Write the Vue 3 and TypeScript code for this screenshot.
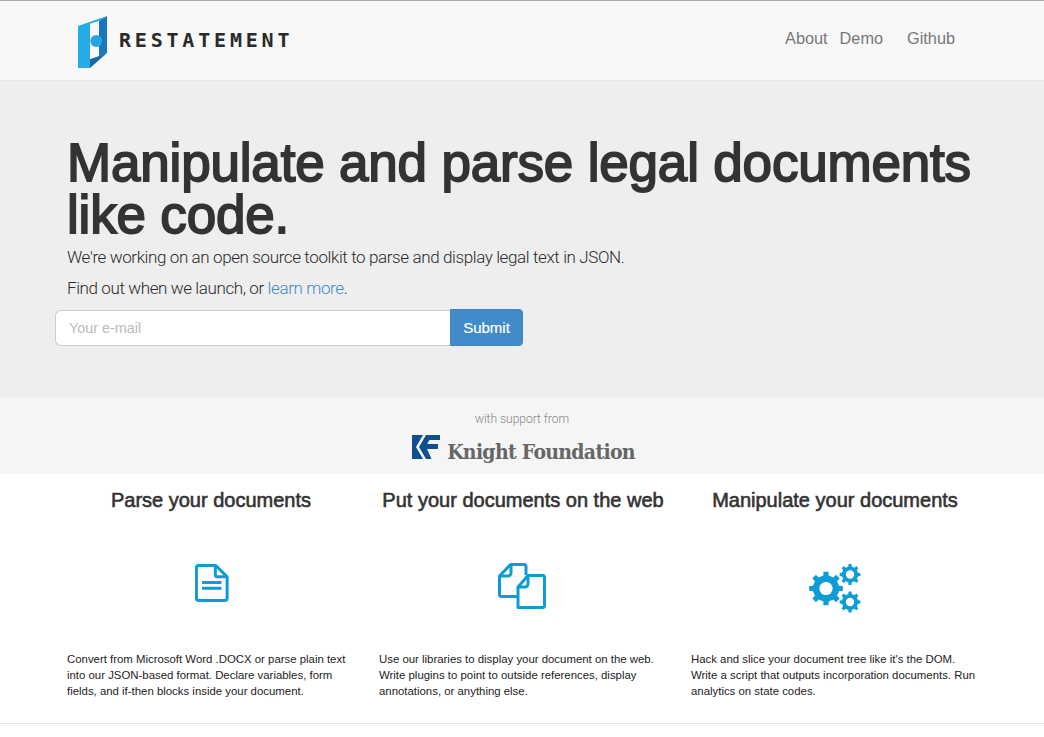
<script setup lang="ts">
interface Feature { title: string; lines: string[]; icon: string }
const features: Feature[] = [
  { title: 'Parse your documents', icon: 'doc', lines: ['Convert from Microsoft Word .DOCX or parse plain text', 'into our JSON-based format. Declare variables, form', 'fields, and if-then blocks inside your document.'] },
  { title: 'Put your documents on the web', icon: 'docs', lines: ['Use our libraries to display your document on the web.', 'Write plugins to point to outside references, display', 'annotations, or anything else.'] },
  { title: 'Manipulate your documents', icon: 'gears', lines: ["Hack and slice your document tree like it's the DOM.", 'Write a script that outputs incorporation documents. Run', 'analytics on state codes.'] }
]
const gear = (cx: number, cy: number, r: number, teeth: number) => {
  const pts: string[] = []
  const step = (Math.PI * 2) / teeth
  for (let i = 0; i < teeth; i++) {
    const a = i * step - Math.PI / 2
    const w = step * 0.19
    const ri = r * 0.78
    const p = (rad: number, ang: number) => `${(cx + rad * Math.cos(ang)).toFixed(2)} ${(cy + rad * Math.sin(ang)).toFixed(2)}`
    pts.push(p(ri, a - w * 1.35), p(r, a - w), p(r, a + w), p(ri, a + w * 1.35))
  }
  return `M${pts.join('L')}Z`
}
const gears = [
  { d: gear(17, 24.500, 17, 8), cx: 17, cy: 24.500, r: 6.600 },
  { d: gear(41, 10.500, 10.500, 8), cx: 41, cy: 10.500, r: 4.200 },
  { d: gear(41, 38, 10.500, 8), cx: 41, cy: 38, r: 4.200 }
]
</script>

<template>
  <div class="page">
    <header class="navbar">
      <div class="brand">
        <svg class="logo" width="30" height="52" viewBox="5 5 30 52" aria-hidden="true">
          <path d="M5 15L34 5L26 10L17 13V57H5Z" fill="#25ace6" />
          <path d="M26 10L34 5V42L26 45Z" fill="#1b76bb" />
          <path d="M17 48L34 42L17 57Z" fill="#1868a8" />
          <path d="M17 13L26 10V45L17 48Z" fill="#f8f8f8" />
          <circle cx="23.300" cy="30" r="6" fill="#25a5e0" />
        </svg>
        <span class="wordmark">RESTATEMENT</span>
      </div>
      <nav class="links">
        <a>About</a><a class="demo">Demo</a><a class="github">Github</a>
      </nav>
    </header>

    <section class="hero">
      <h1>Manipulate and parse legal documents like code.</h1>
      <p class="lead first">We're working on an open source toolkit to parse and display legal text in JSON.</p>
      <p class="lead">Find out when we launch, or <a>learn more</a>.</p>
      <form class="signup" @submit.prevent>
        <input type="text" placeholder="Your e-mail" />
        <button type="submit">Submit</button>
      </form>
    </section>

    <section class="support">
      <div class="with">with support from</div>
      <div class="knight">
        <svg width="28" height="24" viewBox="7 5 28 24" aria-hidden="true">
          <path d="M7 5H18L11 17L18 29H7Z" fill="#0e4f8f" />
          <path d="M21 5H35V10H24.500L22 14H33V19H22L26.500 29H21L14 17Z" fill="#0e4f8f" />
        </svg>
        <span>Knight Foundation</span>
      </div>
    </section>

    <section class="features">
      <article v-for="f in features" :key="f.title" class="feature">
        <h3>{{ f.title }}</h3>
        <div class="icon">
          <svg v-if="f.icon === 'doc'" class="i-doc" width="34" height="38" viewBox="0 0 36 40" fill="none" stroke="#0e9cd6" stroke-width="3.200" stroke-linejoin="round" aria-hidden="true">
            <path d="M3.500 1.500H22L34 13.500V36a2.500 2.500 0 0 1-2.500 2.500H4a2.500 2.500 0 0 1-2.500-2.500V3.500a2 2 0 0 1 2-2Z" />
            <path d="M21.500 2V11a2.500 2.500 0 0 0 2.500 2.500H34" />
            <path d="M7.500 19.500H28M7.500 25.500H28" />
          </svg>
          <svg v-else-if="f.icon === 'docs'" class="i-docs" width="48" height="46" viewBox="0 0 48 46" fill="none" stroke="#0e9cd6" stroke-width="3" stroke-linejoin="round" aria-hidden="true">
            <path d="M20 33.500H3.500a2 2 0 0 1-2-2V13L12.500 1.500H26a2 2 0 0 1 2 2V12" />
            <path d="M2 13H10a3 3 0 0 0 3-3V2" />
            <path d="M20 44.500V24L30 12.500H44.500a2 2 0 0 1 2 2V42.500a2 2 0 0 1-2 2Z" />
            <path d="M20.500 24H27a3 3 0 0 0 3-3V13" />
          </svg>
          <svg v-else width="52" height="49" viewBox="0 0 52 49" aria-hidden="true">
            <path v-for="(g, i) in gears" :key="i" :d="g.d" fill="#0e9cd6" />
            <circle v-for="(g, i) in gears" :key="'h' + i" :cx="g.cx" :cy="g.cy" :r="g.r" fill="#fff" />
          </svg>
        </div>
        <p>
          <template v-for="(line, i) in f.lines" :key="i">{{ line }}<br /></template>
        </p>
      </article>
    </section>
    <hr class="rule" />
  </div>
</template>

<style>
html, body { margin: 0; background: #fff; }
</style>

<style scoped>
.page {
  width: 1044px;
  height: 737px;
  overflow: hidden;
  font-family: "Liberation Sans", Arial, sans-serif;
  color: #333;
  border-top: 1px solid #a9a9a9;
  box-sizing: border-box;
}
.navbar {
  height: 80px;
  box-sizing: border-box;
  background: #f8f8f8;
  border-bottom: 1px solid #e7e7e7;
  display: flex;
  align-items: center;
  justify-content: space-between;
  padding: 0 89px 2px 78px;
}
.brand { display: flex; align-items: center; gap: 11px; }
.logo { margin-top: 4px; }
.wordmark {
  font-family: "DejaVu Sans Mono", monospace;
  font-weight: 700;
  font-size: 20px;
  letter-spacing: 3.800px;
  color: #2a2a2a;
}
.links { display: flex; font-size: 16.300px; color: #777; margin-top: -3px; }
.demo { margin-left: 12px; }
.github { margin-left: 24px; }
.hero {
  height: 316px;
  box-sizing: border-box;
  background: #eee;
  padding: 56px 55px 0;
}
h1 {
  margin: 0 0 0 12px;
  font-size: 53px;
  line-height: 52px;
  letter-spacing: -0.18px;
  font-weight: 400;
  -webkit-text-stroke: 1.800px #333;
  color: #333;
  width: 930px;
}
.lead {
  margin: 0 0 0 12px;
  font-family: Roboto, "Liberation Sans", sans-serif;
  font-size: 17px;
  font-weight: 300;
  line-height: 25px;
  letter-spacing: -0.39px;
  color: #2a2a2a;
}
.lead.first { margin-top: 4px; margin-bottom: 6px; }
.lead a { color: #428bca; }
.signup { display: flex; margin-top: 9px; }
.signup input {
  width: 395px;
  height: 36px;
  box-sizing: border-box;
  border: 1px solid #ccc;
  border-right: none;
  border-radius: 6px 0 0 6px;
  padding: 0 13px;
  font: 14.400px "Liberation Sans", Arial, sans-serif;
  background: #fff;
  outline: none;
}
.signup input::placeholder { color: #bbb; opacity: 1; }
.signup button {
  width: 73px;
  height: 37px;
  margin-top: -1px;
  border: 1px solid #3f85c6;
  border-radius: 0 4px 4px 0;
  background: #428bca;
  color: #fff;
  font: 15px "Liberation Sans", Arial, sans-serif;
  -webkit-text-stroke: 0.2px #fff;
}
.support {
  height: 77px;
  box-sizing: border-box;
  background: #f5f5f5;
  display: flex;
  flex-direction: column;
  align-items: center;
  padding-top: 15px;
}
.with {
  font-family: Roboto, "Liberation Sans", sans-serif;
  font-weight: 300;
  font-size: 12px;
  line-height: 15px;
  color: #888;
}
.knight {
  display: flex;
  align-items: flex-start;
  gap: 7px;
  margin-top: 8px;
  padding-left: 3px;
}
.knight span {
  font-family: "DejaVu Serif", serif;
  font-stretch: condensed;
  font-weight: 700;
  font-size: 21px;
  line-height: 24px;
  letter-spacing: -0.7px;
  color: #666;
  margin-top: 5px;
}
.features {
  height: 249px;
  box-sizing: border-box;
  display: grid;
  grid-template-columns: repeat(3, 312px);
  padding-left: 55px;
}
.feature { padding: 0 12px; }
h3 {
  margin: 13px 0 0;
  text-align: center;
  font-size: 20px;
  line-height: 26px;
  font-weight: 400;
  -webkit-text-stroke: 0.6px #333;
  color: #333;
  white-space: nowrap;
}
.icon {
  height: 54px;
  margin-top: 48px;
  display: flex;
  align-items: center;
  justify-content: center;
}
.i-doc { margin: 0 0 10px 2px; }
.i-docs { margin: 0 2px 5px 0; }
.feature p {
  margin: 36px 0 0;
  font-size: 11.400px;
  line-height: 16px;
  color: #222;
  white-space: nowrap;
}
.rule { margin: 0; border: none; border-top: 1px solid #e5e5e5; }
</style>
